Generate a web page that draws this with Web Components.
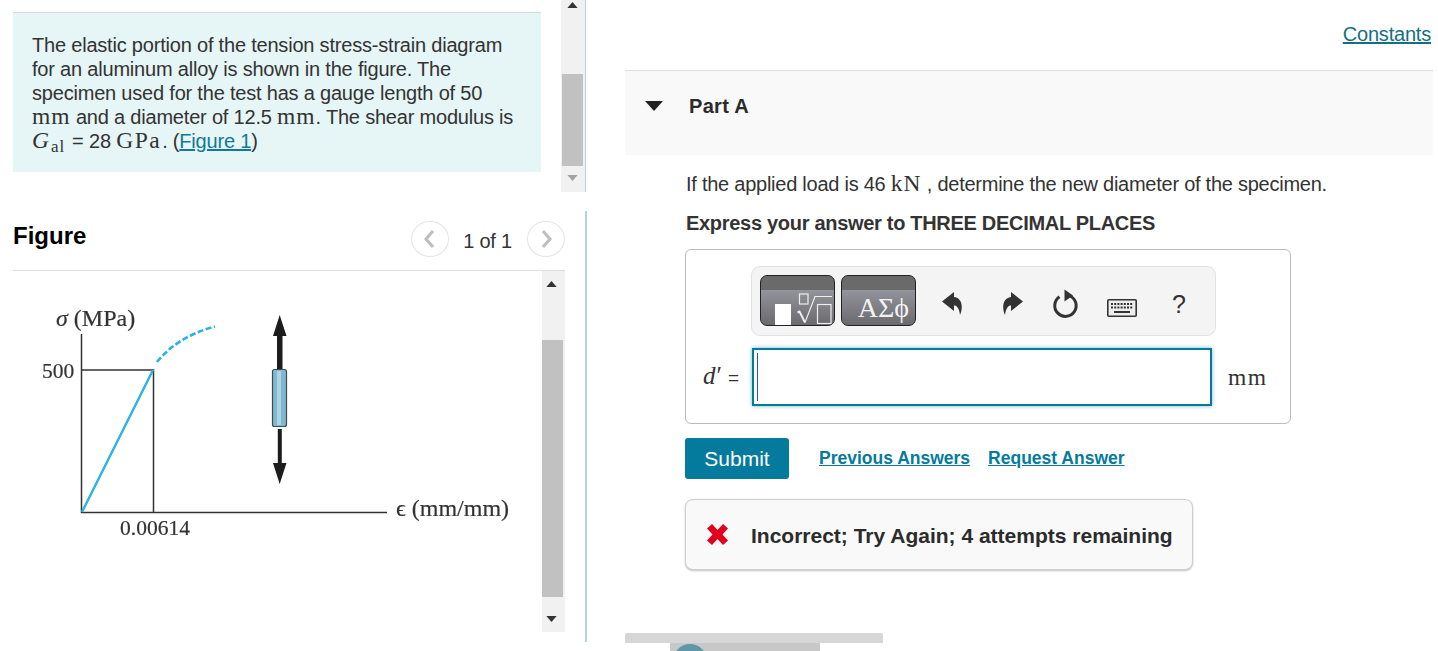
<!DOCTYPE html>
<html lang="en">
<head>
<meta charset="utf-8">
<title>Part A</title>
<style>
    html, body { margin: 0; height: 100%; overflow: hidden; background: #fff; }
    body { font: 20px/24px "Liberation Sans", Arial, sans-serif; color: #333; letter-spacing: -.2px; }
</style>
</head>
<body>
<mp-page>
    <mp-statement slot="left">
        The elastic portion of the tension stress-strain diagram for an aluminum alloy is shown in the figure. The specimen used for the test has a gauge length of 50 <mp-math>mm</mp-math> and a diameter of 12.5 <mp-math>mm</mp-math>. The shear modulus is
        <mp-math><i>G</i><sub style="font-size:17px;line-height:0;vertical-align:-4px;margin:0 1.5px 0 1px">al</sub></mp-math> = 28 <mp-math style="letter-spacing:1.5px;margin-right:1px">GPa</mp-math>. (<a href="#">Figure 1</a>)
    </mp-statement>
    <mp-figure slot="left"></mp-figure>

    <mp-constants slot="right"></mp-constants>
    <mp-part slot="right" title="Part A">
        <div style="letter-spacing:-.25px">If the applied load is 46 <mp-math>kN</mp-math> , determine the new diameter of the specimen.</div>
        <mp-answer></mp-answer>
    </mp-part>
    <mp-next slot="right"></mp-next>
</mp-page>

<script>
"use strict";

class MpPage extends HTMLElement {
    connectedCallback() {
        this.attachShadow({ mode: "open" }).innerHTML = `
            <style>
                :host { display: grid; grid-template-columns: 586px 1fr; width: 1438px; height: 651px; overflow: hidden; }
                .left { display: flex; flex-direction: column; }
                .right { padding-left: 39px; padding-right: 5px; }
            </style>
            <div class="left"><slot name="left"></slot></div>
            <div class="right"><slot name="right"></slot></div>
        `;
    }
}
customElements.define("mp-page", MpPage);

class MpMath extends HTMLElement {
    connectedCallback() {
        // no whitespace around the slot: this host is inline and it would show as a space
        this.attachShadow({ mode: "open" }).innerHTML = `<style>
                :host { display: inline; font-family: "Liberation Serif", serif; font-size: 23.5px; line-height: 0; letter-spacing: 1px; }
            </style><slot></slot>`;
    }
}
customElements.define("mp-math", MpMath);

class MpScrollbar extends HTMLElement {
    connectedCallback() {
        const thumbTop = this.getAttribute("thumb-top");
        const thumbHeight = this.getAttribute("thumb-height");
        const downColor = this.hasAttribute("faded") ? "#a3a3a3" : "#333";
        this.attachShadow({ mode: "open" }).innerHTML = `
            <style>
                :host { display: block; position: relative; background: #f1f1f1; box-sizing: border-box; padding: var(--pad, 0 2px 0 1px); }
                .thumb { background: #c1c1c1; height: ${thumbHeight}px; margin-top: ${thumbTop}px; }
                svg { position: absolute; left: var(--arrow-left, 6px); width: 11px; height: 6px; }
                .up { top: var(--arrow-up, 10px); }
                .down { bottom: var(--arrow-down, 10px); }
            </style>
            <svg class="up" viewBox="0 0 12 7"><path d="M6 0 12 7H0z" fill="#333"/></svg>
            <div class="thumb"></div>
            <svg class="down" viewBox="0 0 12 7"><path d="M0 0H12L6 7z" fill="${downColor}"/></svg>
        `;
    }
}
customElements.define("mp-scrollbar", MpScrollbar);

class MpStatement extends HTMLElement {
    connectedCallback() {
        this.attachShadow({ mode: "open" }).innerHTML = `
            <style>
                :host { display: flex; height: 192px; border-right: 1px solid #b8cfe6; box-sizing: content-box; width: 585px; }
                .box {
                    margin: 12px 20px 20px 13px; width: 528px; box-sizing: border-box;
                    background: #e6f5f6; border-top: 1px solid #d9dcdc; padding: 20px 19px 19px;
                    line-height: 24px;
                }
                ::slotted(a) { color: #0f7a99; text-decoration: underline; }
                mp-scrollbar { width: 24px; --arrow-up: 2px; --arrow-down: 11px; }
            </style>
            <div class="box"><slot></slot></div>
            <mp-scrollbar thumb-top="74" thumb-height="92" faded></mp-scrollbar>
        `;
    }
}
customElements.define("mp-statement", MpStatement);

class MpRoundButton extends HTMLElement {
    connectedCallback() {
        const d = this.getAttribute("dir") === "prev" ? "M14 5 7 13l7 8" : "M8 5l7 8-7 8";
        this.attachShadow({ mode: "open" }).innerHTML = `
            <style>
                :host { display: flex; align-items: center; justify-content: center; width: 38px; height: 36px; box-sizing: border-box; border: 1px solid #e4e4e4; border-radius: 50%; background: #fff; }
                svg { width: 22px; height: 26px; }
            </style>
            <svg viewBox="0 0 22 26"><path d="${d}" fill="none" stroke="#bdbdbd" stroke-width="3"/></svg>
        `;
    }
}
customElements.define("mp-round-button", MpRoundButton);

class MpFigure extends HTMLElement {
    connectedCallback() {
        this.attachShadow({ mode: "open" }).innerHTML = `
            <style>
                :host { display: block; margin-top: 19px; height: 431px; width: 585px; border-right: 2px solid #b8cfe6; box-sizing: content-box; }
                .inner { margin-left: 13px; width: 552px; }
                header { display: flex; align-items: center; height: 59px; border-bottom: 1px solid #dcdfe2; }
                h2 { margin: 0 0 9px; font-size: 24px; line-height: 28px; font-weight: bold; color: #000; flex: 1; letter-spacing: 0; }
                .count { margin: 4px 15px 0 14px; font-size: 20px; line-height: 24px; color: #333; }
                .nav { display: flex; align-items: center; margin-bottom: 4px; }
                .body { display: flex; height: 361px; }
                svg.chart { width: 529px; height: 361px; flex: none; filter: blur(.4px); }
                mp-scrollbar { width: 23px; --pad: 0 2px 0 0; --arrow-left: 4px; }
                text { font-family: "Liberation Serif", serif; font-size: 21.5px; fill: #333; stroke: #333; stroke-width: .2px; letter-spacing: 0; }
                text.big { font-size: 24px; }
            </style>
            <div class="inner">
                <header>
                    <h2>Figure</h2>
                    <div class="nav">
                        <mp-round-button dir="prev"></mp-round-button>
                        <span class="count">1 of 1</span>
                        <mp-round-button dir="next"></mp-round-button>
                    </div>
                </header>
                <div class="body">
                    <svg class="chart" viewBox="13 271 529 361">
                        <g fill="none" stroke="#333" stroke-width="1.5">
                            <path d="M81.5 334V512.500H387"/>
                            <path d="M81.5 370H153.500V512.500"/>
                        </g>
                        <path d="M82 512 153 370" stroke="#29b2e8" stroke-width="2.4" fill="none"/>
                        <path d="M157 362C171 345 190 333 215 326.500" stroke="#29b2e8" stroke-width="2.6" stroke-dasharray="6 2.500" fill="none"/>
                        <path d="M279.700 315 286.500 336H282.500V369H277V336H273z" fill="#1c1c1c"/>
                        <path d="M277.800 429H281.800V463H286.500L279.700 484 273 463H277.800z" fill="#1c1c1c"/>
                        <rect x="272.500" y="369.500" width="14" height="57" rx="2" fill="#7fb9cf" stroke="#3d4c54" stroke-width="1.200"/>
                        <rect x="277" y="371" width="4" height="54" fill="#aed4e2"/>
                        <text class="big" x="56" y="326"><tspan font-style="italic">σ</tspan> (MPa)</text>
                        <text x="42" y="378">500</text>
                        <text x="120" y="535">0.00614</text>
                        <text class="big" x="396" y="516">ϵ (mm/mm)</text>
                    </svg>
                    <mp-scrollbar thumb-top="69" thumb-height="257"></mp-scrollbar>
                </div>
            </div>
        `;
    }
}
customElements.define("mp-figure", MpFigure);

class MpConstants extends HTMLElement {
    connectedCallback() {
        this.attachShadow({ mode: "open" }).innerHTML = `
            <style>
                :host { display: block; text-align: right; padding: 22px 2px 0 0; height: 48px; }
                a { color: #14707f; text-decoration: underline; }
            </style>
            <a href="#">Constants</a>
        `;
    }
}
customElements.define("mp-constants", MpConstants);

class MpPart extends HTMLElement {
    connectedCallback() {
        const title = this.getAttribute("title");
        this.removeAttribute("title");
        this.attachShadow({ mode: "open" }).innerHTML = `
            <style>
                :host { display: block; }
                header {
                    display: flex; align-items: flex-start; height: 84px; box-sizing: content-box;
                    background: #f9f9f9; border-top: 1px solid #e0e0e0;
                }
                svg { width: 18px; height: 10px; margin: 30px 26px 0 20px; }
                h3 { margin: 0; padding-top: 23px; font-size: 20px; line-height: 24px; font-weight: bold; color: #2b2b2b; letter-spacing: .3px; }
                .body { padding: 17px 0 0 61px; }
            </style>
            <header>
                <svg viewBox="0 0 18 10"><path d="M0 0H18L9 10z" fill="#222"/></svg>
                <h3>${title}</h3>
            </header>
            <div class="body"><slot></slot></div>
        `;
    }
}
customElements.define("mp-part", MpPart);

class MpMathToolbar extends HTMLElement {
    connectedCallback() {
        this.attachShadow({ mode: "open" }).innerHTML = `
            <style>
                :host {
                    display: flex; align-items: center; width: 465px; height: 70px; box-sizing: border-box;
                    background: #f4f4f4; border: 1px solid #e2e2e2; border-radius: 9px; padding: 0 8px; gap: 6px;
                }
                .tpl {
                    width: 75px; height: 51px; margin-bottom: 2px; box-sizing: border-box; border: 1px solid #222; border-radius: 7px;
                    background: linear-gradient(#6a6a6a 0 14px, #93939b 14px, #6a6a6e 100%);
                    overflow: hidden; color: #f2f2f2;
                    display: flex; align-items: flex-end; justify-content: flex-end;
                }
                .tpl svg { display: block; width: 73px; height: 49px; }
                .sym { font: 28px/34px "Liberation Serif", serif; padding-right: 6px; letter-spacing: 0; }
                .tools { display: flex; align-items: center; margin: 6px 0 0 19.5px; }
                .tools svg { display: block; }
                .q { font-size: 25px; line-height: 30px; color: #333; letter-spacing: 0; }
            </style>
            <div class="tpl">
                <svg viewBox="0 0 73 49">
                    <rect x="14" y="28" width="16" height="21" fill="#fff"/>
                    <rect x="38.500" y="18" width="8.500" height="10" fill="none" stroke="#eee" stroke-width="1.200"/>
                    <path d="M36.500 36.500 38.500 35.500 44 46.500" fill="none" stroke="#eee" stroke-width="2"/>
                    <path d="M44 46.500 54 20.500H71" fill="none" stroke="#eee" stroke-width="1.200"/>
                    <rect x="56.500" y="28.500" width="13.500" height="19" fill="none" stroke="#eee" stroke-width="1.200"/>
                </svg>
            </div>
            <div class="tpl"><span class="sym">ΑΣϕ</span></div>
            <div class="tools">
                <svg width="21" height="24" viewBox="0 0 21 24"><path d="M12 0 0 9.500 12 19V13.500C15 13.500 17 16 18 23 21 17 21 6 12 5z" fill="#333"/></svg>
                <svg width="21" height="24" viewBox="0 0 21 24" style="margin-left:39px"><path d="M9 0 21 9.500 9 19V13.500C6 13.500 4 16 3 23 0 17 0 6 9 5z" fill="#333"/></svg>
                <svg width="28" height="30" viewBox="0 0 28 30" style="margin-left:29.500px"><path d="M7.500 7.800A10.700 10.700 0 1 0 18 7" fill="none" stroke="#333" stroke-width="3"/><path d="M12.500 .5 21 6.500 12.500 12.500z" fill="#333"/></svg>
                <svg width="30" height="18" viewBox="0 0 30 18" style="margin:8px 0 0 27px">
                    <rect x=".8" y=".8" width="28.400" height="16.400" rx="1" fill="#eee" stroke="#333" stroke-width="1.600"/>
                    <path d="M4 5H26M4 8.500H26" stroke="#333" stroke-width="2" stroke-dasharray="2 1.200"/>
                    <path d="M7 13H23" stroke="#333" stroke-width="2"/>
                </svg>
                <span class="q" style="margin-left:35px">?</span>
            </div>
        `;
    }
}
customElements.define("mp-math-toolbar", MpMathToolbar);

class MpFeedback extends HTMLElement {
    connectedCallback() {
        this.attachShadow({ mode: "open" }).innerHTML = `
            <style>
                :host {
                    display: flex; align-items: center; width: 508px; height: 71px; box-sizing: border-box;
                    background: #f9f9f9; border: 1px solid #cfcfcf; border-radius: 8px; box-shadow: 0 1px 2px rgba(0,0,0,.25);
                    margin-top: 20px; padding-left: 21px; color: #2b2b2b;
                }
                svg { width: 21px; height: 21px; margin-right: 23px; flex: none; }
                span { font-size: 21px; font-weight: bold; line-height: 24px; letter-spacing: 0; margin-top: 2px; }
            </style>
            <svg viewBox="0 0 21 21"><path d="M5 0 10.500 6 16 0 21 4.500 15.500 10.500 21 16.500 16 21 10.500 15 5 21 0 16.500 5.500 10.500 0 4.500z" fill="#e2001e"/></svg>
            <span><slot></slot></span>
        `;
    }
}
customElements.define("mp-feedback", MpFeedback);

class MpAnswer extends HTMLElement {
    connectedCallback() {
        this.attachShadow({ mode: "open" }).innerHTML = `
            <style>
                :host { display: block; margin-left: -1px; }
                .hint { font-weight: bold; color: #333; margin: 15px 0 14px 1px; line-height: 24px; letter-spacing: -.3px; }
                .box {
                    width: 606px; height: 175px; box-sizing: border-box; border: 1px solid #bbb; border-radius: 6px;
                    padding: 16px 0 0 65px;
                }
                .row { display: flex; align-items: center; margin: 12px 0 0 -48px; }
                .lhs { width: 49px; font-family: "Liberation Serif", serif; font-size: 25px; flex: none; color: #333; white-space: nowrap; letter-spacing: 1px; }
                .lhs span { font-family: "Liberation Sans", sans-serif; font-size: 19px; margin-left: 5px; letter-spacing: 0; }
                .input {
                    width: 460px; height: 58px; box-sizing: border-box; border: 2px solid #047a9c; background: #fff;
                    box-shadow: 0 0 4px rgba(4,122,156,.55); padding: 3px 0 3px 3px; flex: none;
                }
                .caret { width: 1px; height: 100%; background: #1a56e8; }
                .unit { font: 23.5px/24px "Liberation Serif", serif; letter-spacing: 1.5px; margin-left: 16px; color: #333; }
                .actions { display: flex; align-items: center; margin-top: 14px; }
                button {
                    width: 104px; height: 41px; border: 0; border-radius: 3px; background: #047a9c; color: #fff;
                    font: 21px/24px "Liberation Sans", sans-serif; padding: 0; margin-right: 30px; letter-spacing: 0;
                }
                .actions a { color: #047a9c; font-size: 17.5px; font-weight: bold; line-height: 24px; margin: 0 18px 2px 0; letter-spacing: 0; }
            </style>
            <div class="hint">Express your answer to THREE DECIMAL PLACES</div>
            <div class="box">
                <mp-math-toolbar></mp-math-toolbar>
                <div class="row">
                    <div class="lhs"><i>d</i>′<span>=</span></div>
                    <div class="input"><div class="caret"></div></div>
                    <div class="unit">mm</div>
                </div>
            </div>
            <div class="actions">
                <button>Submit</button>
                <a href="#">Previous Answers</a>
                <a href="#">Request Answer</a>
            </div>
            <mp-feedback>Incorrect; Try Again; 4 attempts remaining</mp-feedback>
        `;
    }
}
customElements.define("mp-answer", MpAnswer);

class MpNext extends HTMLElement {
    connectedCallback() {
        this.attachShadow({ mode: "open" }).innerHTML = `
            <style>
                :host { display: block; margin-top: 63px; }
                .bar { width: 258px; height: 10px; background: #d6d6d6; border-radius: 2px 2px 0 0; }
                .sub { width: 150px; height: 8px; margin-left: 45px; background: #c8c8c8; overflow: hidden; }
                .dot { width: 34px; height: 34px; margin: 1px 0 0 3px; border-radius: 50%; background: #5f96a8; }
            </style>
            <div class="bar"></div>
            <div class="sub"><div class="dot"></div></div>
        `;
    }
}
customElements.define("mp-next", MpNext);
</script>
</body>
</html>
